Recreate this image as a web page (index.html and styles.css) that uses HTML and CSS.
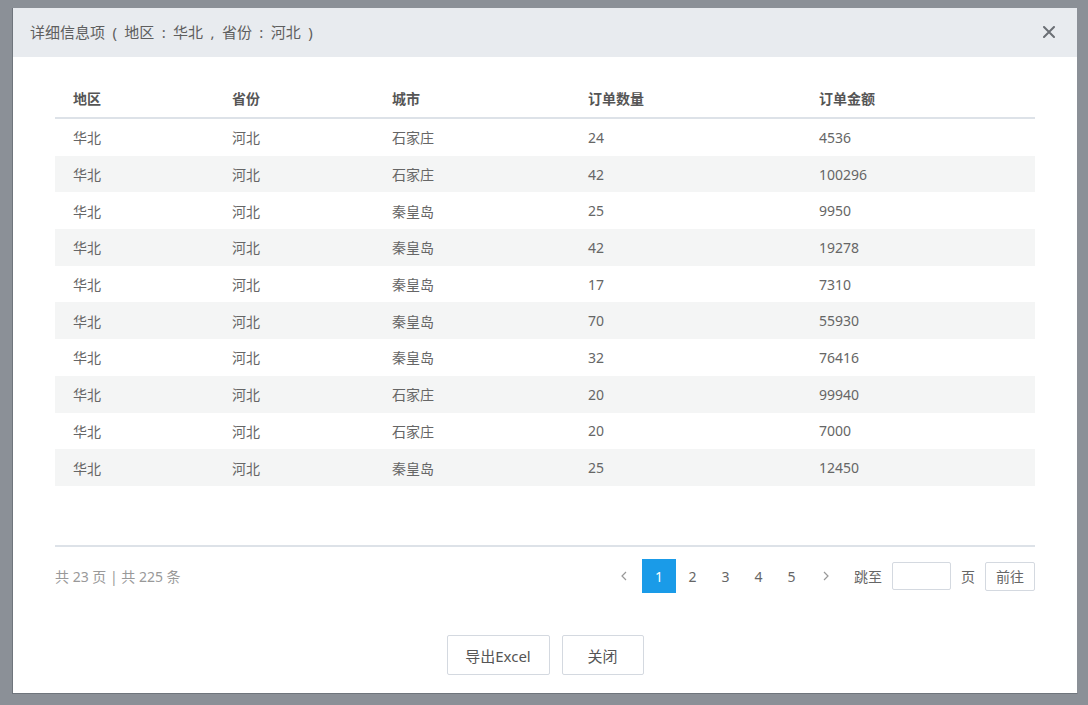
FILE: index.html
```html
<!DOCTYPE html>
<html lang="zh-CN">
<head>
<meta charset="utf-8">
<title>详细信息项</title>
<link rel="stylesheet" href="styles.css">
</head>
<body>
<div class="overlay">
  <div class="dialog">
    <div class="dialog-header">
      <span class="dialog-title">详细信息项 ( 地区 : 华北 , 省份 : 河北 )</span>
      <span class="close" aria-label="关闭">
        <svg width="12" height="12" viewBox="0 0 12 12"><path d="M1 1L11 11M11 1L1 11" stroke="#6b6f75" stroke-width="2" stroke-linecap="round"/></svg>
      </span>
    </div>
    <div class="dialog-body">
      <div class="table">
        <div class="row head">
          <div class="c c1">地区</div><div class="c c2">省份</div><div class="c c3">城市</div><div class="c c4">订单数量</div><div class="c c5">订单金额</div>
        </div>
        <div class="row"><div class="c c1">华北</div><div class="c c2">河北</div><div class="c c3">石家庄</div><div class="c c4">24</div><div class="c c5">4536</div></div>
        <div class="row"><div class="c c1">华北</div><div class="c c2">河北</div><div class="c c3">石家庄</div><div class="c c4">42</div><div class="c c5">100296</div></div>
        <div class="row"><div class="c c1">华北</div><div class="c c2">河北</div><div class="c c3">秦皇岛</div><div class="c c4">25</div><div class="c c5">9950</div></div>
        <div class="row"><div class="c c1">华北</div><div class="c c2">河北</div><div class="c c3">秦皇岛</div><div class="c c4">42</div><div class="c c5">19278</div></div>
        <div class="row"><div class="c c1">华北</div><div class="c c2">河北</div><div class="c c3">秦皇岛</div><div class="c c4">17</div><div class="c c5">7310</div></div>
        <div class="row"><div class="c c1">华北</div><div class="c c2">河北</div><div class="c c3">秦皇岛</div><div class="c c4">70</div><div class="c c5">55930</div></div>
        <div class="row"><div class="c c1">华北</div><div class="c c2">河北</div><div class="c c3">秦皇岛</div><div class="c c4">32</div><div class="c c5">76416</div></div>
        <div class="row"><div class="c c1">华北</div><div class="c c2">河北</div><div class="c c3">石家庄</div><div class="c c4">20</div><div class="c c5">99940</div></div>
        <div class="row"><div class="c c1">华北</div><div class="c c2">河北</div><div class="c c3">石家庄</div><div class="c c4">20</div><div class="c c5">7000</div></div>
        <div class="row"><div class="c c1">华北</div><div class="c c2">河北</div><div class="c c3">秦皇岛</div><div class="c c4">25</div><div class="c c5">12450</div></div>
      </div>
      <div class="pager">
        <div class="total">共 23 页 | 共 225 条</div>
        <div class="pages">
          <span class="arrow">
            <svg width="8" height="10" viewBox="0 0 8 10"><path d="M6 1L2 5L6 9" fill="none" stroke="#999" stroke-width="1.2"/></svg>
          </span>
          <span class="page active">1</span>
          <span class="page">2</span>
          <span class="page">3</span>
          <span class="page">4</span>
          <span class="page">5</span>
          <span class="arrow">
            <svg width="8" height="10" viewBox="0 0 8 10"><path d="M2 1L6 5L2 9" fill="none" stroke="#999" stroke-width="1.2"/></svg>
          </span>
          <span class="jump">跳至</span>
          <input class="jump-input" type="text">
          <span class="jump-unit">页</span>
          <button class="go">前往</button>
        </div>
      </div>
      <div class="footer">
        <button class="btn btn-export">导出Excel</button>
        <button class="btn btn-close">关闭</button>
      </div>
    </div>
  </div>
</div>
</body>
</html>
```
FILE: styles.css
```css
* { box-sizing: border-box; }
html, body {
  margin: 0;
  padding: 0;
  width: 1088px;
  height: 705px;
  overflow: hidden;
}
body {
  font-family: "Noto Sans", "Noto Sans CJK SC", sans-serif;
  font-size: 14px;
  color: #666;
}
.overlay {
  width: 1088px;
  height: 705px;
  background: #8b9097;
  padding: 8px 10px 0 12px;
}
.dialog {
  width: 1066px;
  height: 686px;
  background: #fff;
  border: 1px solid #6f757c;
  border-top: 0;
  border-right-color: #8b9097;
  display: flex;
  flex-direction: column;
}
.dialog-header {
  height: 49px;
  background: #e8ebef;
  display: flex;
  align-items: center;
  justify-content: space-between;
  padding: 0 22px 3px 17px;
  flex-shrink: 0;
}
.dialog-title {
  color: #5e5e5e;
  font-size: 15px;
  word-spacing: 3.5px;
}
.close {
  display: flex;
  align-items: center;
  padding-top: 2px;
}
.dialog-body {
  padding: 23px 42px 0 42px;
  display: flex;
  flex-direction: column;
}
.table {
  height: 467px;
  border-bottom: 2px solid #dde2e8;
}
.row {
  display: flex;
  height: 36.7px;
  align-items: center;
}
.row.head {
  height: 39px;
  border-bottom: 2px solid #dde2e8;
  color: #555;
  font-weight: 600;
  padding-bottom: 1px;
}
.row:nth-child(odd):not(.head) {
  background: #f4f5f5;
}
.c { padding-left: 18px; }
.c1 { width: 159px; }
.c2 { width: 160px; }
.c3 { width: 196px; }
.c4 { width: 231px; }
.c5 { flex: 1; }
.pager {
  display: flex;
  justify-content: space-between;
  align-items: center;
  height: 58px;
}
.total {
  color: #999;
}
.pages {
  display: flex;
  align-items: center;
}
.arrow {
  width: 36px;
  height: 34px;
  display: flex;
  align-items: center;
  justify-content: center;
}
.page {
  width: 33px;
  height: 34px;
  display: flex;
  align-items: center;
  justify-content: center;
  color: #666;
}
.page.active {
  width: 34px;
  background: #1a9be8;
  color: #fff;
}
.jump {
  margin-left: 10px;
  color: #666;
}
.jump-input {
  width: 59px;
  height: 28px;
  margin: 0 10px;
  border: 1px solid #d4d9e0;
  border-radius: 2px;
  outline: none;
  font: inherit;
}
.go {
  margin-left: 10px;
  width: 50px;
  height: 29px;
  border: 1px solid #d4d9e0;
  border-radius: 2px;
  background: #fff;
  color: #666;
  font: inherit;
  padding: 0;
}
.footer {
  display: flex;
  justify-content: center;
  gap: 12px;
  padding-top: 30px;
}
.btn {
  height: 40px;
  border: 1px solid #d4d9e0;
  border-radius: 2px;
  background: #fff;
  color: #555;
  font: inherit;
  font-size: 15px;
  padding: 0;
}
.btn-export { width: 103px; }
.btn-close { width: 82px; }
```
